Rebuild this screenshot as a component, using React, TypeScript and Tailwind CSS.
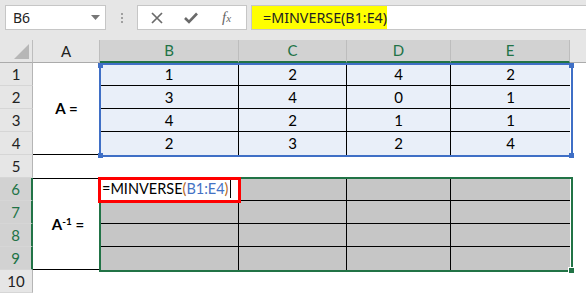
import React from "react";

const matrix = [
  [1, 2, 4, 2],
  [3, 4, 0, 1],
  [4, 2, 1, 1],
  [2, 3, 2, 4],
];

const letters = ["B", "C", "D", "E"];

function RowHead({ n, active = false }: { n: number; active?: boolean }) {
  return (
    <div
      className={`flex items-center justify-center border-b border-b-[#d6d6d6] text-[15px] ${
        active
          ? "bg-[#d2d2d2] text-[#217346] border-r-2 border-r-[#217346]"
          : "bg-[#e6e6e6] text-[#222222] border-r border-r-[#b5b5b5]"
      }`}
    >
      {n}
    </div>
  );
}

function FormulaBar() {
  return (
    <div className="flex h-10 items-start bg-[#e6e6e6] pl-[5px] pt-[5px] font-['Noto_Sans',sans-serif]">
      <div className="flex h-[25px] w-[101px] items-center justify-between border border-[#c6c6c6] bg-white pl-[7px] pr-[5px] text-[14px] text-[#222222]">
        <span>B6</span>
        <svg width="9" height="5" viewBox="0 0 9 5">
          <polygon points="0,0 9,0 4.5,5" fill="#777777" />
        </svg>
      </div>
      <div className="flex h-[25px] w-[31px] flex-col items-center justify-center gap-[2px]">
        <span className="h-[2px] w-[2px] bg-[#a0a0a0]" />
        <span className="h-[2px] w-[2px] bg-[#a0a0a0]" />
        <span className="h-[2px] w-[2px] bg-[#a0a0a0]" />
      </div>
      <div className="flex h-[25px] w-[110px] items-center border border-[#c6c6c6] bg-white text-[#707070]">
        <svg className="ml-[13px]" width="12" height="12" viewBox="0 0 12 12">
          <path d="M1 1 L11 11 M11 1 L1 11" stroke="#6a6a6a" strokeWidth="1.7" />
        </svg>
        <svg className="ml-[21px]" width="14" height="12" viewBox="0 0 14 12">
          <path d="M1 6 L5 10 L13 1.5" stroke="#6a6a6a" strokeWidth="2.6" fill="none" />
        </svg>
        <span className="ml-[24px] font-['Liberation_Serif',serif] text-[15px] italic text-[#666666]">
          f<span className="text-[11px]">x</span>
        </span>
      </div>
      <div className="ml-[4px] flex h-[25px] flex-1 border border-r-0 border-[#c6c6c6] bg-white">
        <div className="flex h-full w-[135px] items-center bg-[#ffff00] pl-[11px] text-[14.3px] text-[#222222]">
          =MINVERSE(B1:E4)
        </div>
      </div>
    </div>
  );
}

export default function App() {
  return (
    <div className="h-[294px] w-[586px] overflow-hidden bg-white font-['Lato',sans-serif]">
      <FormulaBar />
      <div className="relative grid grid-cols-[33px_67px_139px_108px_104px_119px_1fr] grid-rows-[23px_repeat(10,23px)]">
        {/* header row */}
        <div className="relative border-b border-r border-b-[#ababab] border-r-[#bdbdbd] bg-[#e6e6e6]">
          <svg className="absolute bottom-[3px] right-[3px]" width="15" height="15" viewBox="0 0 15 15">
            <polygon points="15,0 15,15 0,15" fill="#b7b7b7" />
          </svg>
        </div>
        <div className="flex items-center justify-center border-b border-r border-b-[#ababab] border-r-[#bdbdbd] bg-[#e6e6e6] text-[15px] text-[#222222]">
          A
        </div>
        {letters.map((l) => (
          <div
            key={l}
            className="flex items-center justify-center border-b-2 border-r border-b-[#217346] border-r-[#bdbdbd] bg-[#d2d2d2] text-[15px] text-[#217346]"
          >
            {l}
          </div>
        ))}
        <div className="border-b border-b-[#ababab] bg-[#e6e6e6]" />

        {/* rows 1-4 */}
        {matrix.map((row, i) => (
          <React.Fragment key={i}>
            <RowHead n={i + 1} />
            {i === 0 && (
              <div className="row-span-4 flex items-center justify-center border-b border-b-black text-[15px] font-bold text-black">
                A =
              </div>
            )}
            {row.map((v, j) => (
              <div
                key={j}
                className={`flex items-center justify-center bg-[#e9eff9] text-[15px] text-black ${
                  j < 3 ? "border-r border-r-black" : ""
                } ${i < 3 ? "border-b border-b-black" : ""}`}
              >
                {v}
              </div>
            ))}
            <div />
          </React.Fragment>
        ))}

        {/* row 5 */}
        <RowHead n={5} />
        <div className="col-span-6" />

        {/* rows 6-9 */}
        {[0, 1, 2, 3].map((i) => (
          <React.Fragment key={i}>
            <RowHead n={i + 6} active />
            {i === 0 && (
              <div className="row-span-4 flex items-center justify-center border-y border-y-black text-[15px] font-bold text-black">
                <span className="pl-[3px]">
                  A<sup className="text-[10px]">-1</sup> =
                </span>
              </div>
            )}
            {[0, 1, 2, 3].map((j) =>
              i === 0 && j === 0 ? (
                <div
                  key={j}
                  className="flex items-center border-b border-r border-black bg-white pl-[2px] text-[14.5px] text-black"
                >
                  =MINVERSE
                  <span className="text-[#b5651d]">(</span>
                  <span className="text-[#4472c4]">B1:E4</span>
                  <span className="text-[#b5651d]">)</span>
                  <span className="ml-[2px] h-[18px] w-px bg-black" />
                </div>
              ) : (
                <div
                  key={j}
                  className={`bg-[#c6c6c6] ${j < 3 ? "border-r border-r-black" : ""} ${
                    i < 3 ? "border-b border-b-black" : ""
                  }`}
                />
              )
            )}
            <div />
          </React.Fragment>
        ))}

        {/* row 10 */}
        <RowHead n={10} />
        <div className="col-span-6" />

        {/* range highlight B1:E4 */}
        <div className="pointer-events-none absolute left-[99px] top-[23px] h-[94px] w-[474px] border-2 border-[#3f6fc6]">
          <span className="absolute -left-[3px] -top-[2px] h-[5px] w-[5px] bg-[#3f6fc6]" />
          <span className="absolute -right-[3px] -top-[2px] h-[5px] w-[5px] bg-[#3f6fc6]" />
          <span className="absolute -bottom-[3px] -left-[3px] h-[5px] w-[5px] bg-[#3f6fc6]" />
          <span className="absolute -bottom-[3px] -right-[3px] h-[5px] w-[5px] bg-[#3f6fc6]" />
        </div>

        {/* selection B6:E9 */}
        <div className="pointer-events-none absolute left-[99px] top-[137px] h-[95px] w-[474px] border-2 border-[#217346]">
          <span className="absolute -bottom-[4px] -right-[4px] h-[7px] w-[7px] border border-white bg-[#217346]" />
        </div>

        {/* annotation box around B6 */}
        <div className="pointer-events-none absolute left-[98px] top-[137px] h-[26px] w-[143px] border-[3px] border-[#ff0000]" />
      </div>
    </div>
  );
}
